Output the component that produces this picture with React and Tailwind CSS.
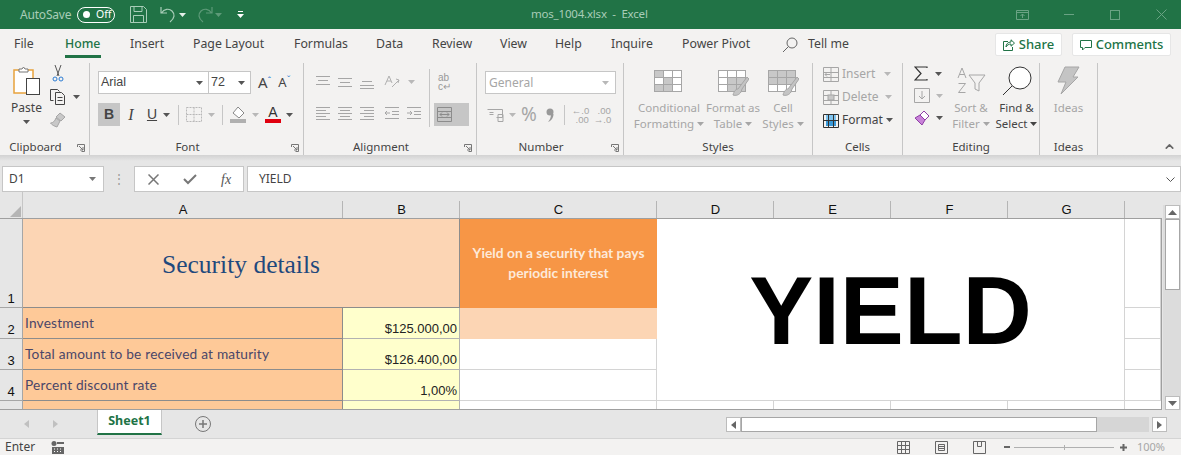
import { ChevronUp } from 'lucide-react';

const UI = 'font-["Noto_Sans",sans-serif]';

function Caret({ className = '', color = '#555' }) {
  return (
    <svg width="7" height="4" viewBox="0 0 7 4" className={className}>
      <path d="M0 0h7L3.5 4z" fill={color} />
    </svg>
  );
}

function Launcher({ color = '#777' }) {
  return (
    <svg width="8" height="8" viewBox="0 0 8 8" className="absolute right-[4px] bottom-[3px]">
      <path d="M0.5 3V0.5H7.5V7.5H4.5" fill="none" stroke={color} />
      <path d="M2 2l4 4M6 3v3H3" fill="none" stroke={color} />
    </svg>
  );
}

function Group({ width, label, launcher, children }) {
  return (
    <div className={`relative shrink-0 flex flex-col h-[92px] mt-[3px] border-r border-[#c6c6c6] ${width}`}>
      <div className="flex-1 min-h-0 flex">{children}</div>
      <div className={`h-[15px] leading-[14px] text-center text-[11.5px] text-[#444] ${launcher ? 'pr-[18px]' : ''}`}>{label}</div>
      {launcher && <Launcher />}
    </div>
  );
}

function Lines({ rows, color = '#a6a6a6', w = 14 }) {
  return (
    <svg width={w} height="14" viewBox={`0 0 ${w} 14`}>
      {rows.map(([y, x1, x2]) => (
        <path key={y} d={`M${x1} ${y}.5H${x2}`} stroke={color} />
      ))}
    </svg>
  );
}

function BigLabel({ top, bottom, color = '#a6a6a6', caret = true }) {
  return (
    <div className="text-center leading-[16px] text-[11.5px] whitespace-nowrap" style={{ color }}>
      <div>{top}</div>
      <div className="flex items-center justify-center gap-[3px]">
        {bottom}
        {caret && <Caret color={color} />}
      </div>
    </div>
  );
}

function TableIcon({ fills = [], brush }) {
  return (
    <svg width="32" height="28" viewBox="0 0 32 28">
      <rect x="1.5" y="1.5" width="27" height="21" fill="#fff" stroke="#a6a6a6" />
      {fills.map(([x, y, w, h], i) => (
        <rect key={i} x={x} y={y} width={w} height={h} fill="#c8c8c8" />
      ))}
      <path d="M1.5 8.5h27M1.5 15.5h27M10.5 1.5v21M19.5 1.5v21" stroke="#a6a6a6" fill="none" />
      {brush && <path d="M30 8l-9 12c-2 0-4 2-5 6 3 1 6 0 8-3l1-3 7-10z" fill="#c4c4c4" stroke="#a6a6a6" />}
    </svg>
  );
}

const tabs = [
  ['File', 'w-[51px]'],
  ['Home', 'w-[65px]'],
  ['Insert', 'w-[63px]'],
  ['Page Layout', 'w-[101px]'],
  ['Formulas', 'w-[82px]'],
  ['Data', 'w-[56px]'],
  ['Review', 'w-[68px]'],
  ['View', 'w-[55px]'],
  ['Help', 'w-[56px]'],
  ['Inquire', 'w-[71px]'],
  ['Power Pivot', 'w-[68px]'],
];

function TitleBar() {
  return (
    <div className="h-[29px] shrink-0 bg-[#217346] flex items-center text-[#a8cdb8]">
      <div className="w-[531px] shrink-0 flex items-center pl-[20px]">
        <span className="w-[57px] text-[12px] tracking-[-0.2px]">AutoSave</span>
        <div className="w-[38px] h-[16px] rounded-full border border-white flex items-center pl-[5px] gap-[6px] text-white text-[10.5px] leading-none">
          <span className="w-[7px] h-[7px] rounded-full bg-white" />
          Off
        </div>
        <svg width="17" height="17" viewBox="0 0 17 17" className="ml-[15px]" fill="none" stroke="#a8cdb8">
          <path d="M.5.5h13l3 3v13H.5zM4 .5v5h8v-5M3.5 16.5v-7h10v7" />
        </svg>
        <svg width="16" height="17" viewBox="0 0 16 17" className="ml-[13px]" fill="none" stroke="#a8cdb8" strokeWidth="1.2">
          <path d="M1 1v6h6M1.5 7C4 3 9 2 12 5s3 7-2 11" />
        </svg>
        <Caret className="ml-[3px]" color="#e6f0ea" />
        <svg width="16" height="17" viewBox="0 0 16 17" className="ml-[11px]" fill="none" stroke="#5d9a78" strokeWidth="1.2">
          <path d="M15 1v6H9M14.5 7C12 3 7 2 4 5s-3 7 2 11" />
        </svg>
        <Caret className="ml-[2px]" color="#5d9a78" />
        <svg width="7" height="7" viewBox="0 0 7 7" className="ml-[15px]">
          <path d="M1 .5h5" stroke="#fff" />
          <path d="M0 3h7L3.5 7z" fill="#fff" />
        </svg>
      </div>
      <span className="whitespace-pre text-[11.5px] tracking-[-0.2px] pb-[2px]">mos_1004.xlsx  -  Excel</span>
      <div className="ml-auto flex items-center pr-[14px]">
        <svg width="13" height="10" viewBox="0 0 13 10" fill="none" stroke="#6aa384">
          <path d="M.5.5h12v9H.5zM.5 2.5h12M6.5 8V4M4.5 6l2-2 2 2" />
        </svg>
        <span className="ml-[35px] w-[10px] h-px bg-[#6aa384]" />
        <span className="ml-[36px] w-[10px] h-[10px] border border-[#6aa384]" />
        <svg width="11" height="11" viewBox="0 0 11 11" className="ml-[36px]" stroke="#6aa384">
          <path d="M.5.5l10 10M10.5.5l-10 10" />
        </svg>
      </div>
    </div>
  );
}

function TabRow() {
  return (
    <div className="h-[31px] shrink-0 flex items-center pl-[14px] text-[12.3px] text-[#444]">
      <div className="flex">
        {tabs.map(([t, w]) => (
          <div key={t} className={`${w} shrink-0 whitespace-nowrap`}>
            <span className={t === 'Home' ? 'relative text-[#217346] font-medium' : ''}>
              {t}
              {t === 'Home' && <span className="absolute left-0 right-[-1px] top-[20px] h-[3px] bg-[#217346]" />}
            </span>
          </div>
        ))}
      </div>
      <svg width="16" height="16" viewBox="0 0 16 16" className="ml-[32px]" fill="none" stroke="#666">
        <circle cx="10" cy="6" r="5" />
        <path d="M6.5 9.5L1 15" />
      </svg>
      <span className="ml-[10px]">Tell me</span>
      <div className="ml-auto mr-[10px] flex gap-[10px] text-[13px] font-medium text-[#217346]">
        <div className="w-[67px] h-[23px] bg-white rounded-[2px] border border-[#e6e6e6] flex items-center justify-center gap-[4px]">
          <svg width="12" height="12" viewBox="0 0 12 12" fill="none" stroke="#217346">
            <path d="M5 2.5H.5v9h9V8M3 8c0-3 2-5 5-5V.8l3.5 3.3L8 7.2V5C6 5 4 6 3 8z" />
          </svg>
          Share
        </div>
        <div className="w-[99px] h-[23px] bg-white rounded-[2px] border border-[#e6e6e6] flex items-center justify-center gap-[4px]">
          <svg width="12" height="12" viewBox="0 0 12 12" fill="none" stroke="#217346">
            <path d="M.5 1.5h11v7H5L2.5 11V8.5h-2z" />
          </svg>
          Comments
        </div>
      </div>
    </div>
  );
}

function Clipboard() {
  return (
    <Group width="w-[90px]" label="Clipboard" launcher>
      <div className="w-[48px] flex flex-col items-center pt-[3px] pl-[5px]">
        <svg width="28" height="30" viewBox="0 0 28 30" fill="none">
          <rect x="1" y="4" width="19" height="23" fill="#fff" stroke="#e8a33d" strokeWidth="1.5" />
          <path d="M6 6V3h3l1.5-2 1.5 2h3v3z" fill="#fff" stroke="#777" />
          <rect x="13.5" y="12.5" width="13" height="16" fill="#fff" stroke="#444" />
        </svg>
        <span className="text-[12px] text-[#444] leading-[16px] mt-[4px]">Paste</span>
        <Caret className="mt-[4px]" />
      </div>
      <div className="flex flex-col pl-[2px] pt-[2px] gap-[7px]">
        <svg width="16" height="17" viewBox="0 0 16 17" fill="none" stroke="#555">
          <path d="M5 0l4 11M11 0L7 11" />
          <circle cx="5" cy="14" r="2" stroke="#2b7cd3" />
          <circle cx="11" cy="14" r="2" stroke="#2b7cd3" />
        </svg>
        <div className="flex items-center gap-[7px]">
          <svg width="16" height="16" viewBox="0 0 16 16" fill="none" stroke="#444">
            <path d="M3.5 11.5H.5V.5h7l2 2M5.5 3.5h6l3 3v9h-9zM7.5 8.5h5M7.5 11.5h5" />
          </svg>
          <Caret />
        </div>
        <svg width="16" height="16" viewBox="0 0 16 16" fill="#c8c8c8" stroke="#a6a6a6">
          <path d="M10 1l5 4-4 4-5-4zM6 6l4 3-3 6c-3-1-5-2-6.5-4C3 11 5 9 6 6z" />
        </svg>
      </div>
    </Group>
  );
}

function Font() {
  return (
    <Group width="w-[214px]" label="Font" launcher>
      <div className="flex flex-col pl-[8px] pt-[8px]">
        <div className="flex items-center h-[23px]">
          <div className="w-[111px] h-[23px] bg-white border border-[#c6c6c6] flex items-center justify-between px-[2px] pr-[5px] text-[12.5px] font-['Liberation_Sans',sans-serif] text-[#444]">
            Arial <Caret />
          </div>
          <div className="w-[42px] h-[23px] bg-white border border-[#c6c6c6] border-l-0 flex items-center justify-between px-[2px] pr-[5px] text-[12.5px] font-['Liberation_Sans',sans-serif] text-[#444]">
            72 <Caret />
          </div>
          <span className="ml-[7px] text-[15px] text-[#444] leading-none">A<sup className="text-[#2b7cd3] text-[9px]">ˆ</sup></span>
          <span className="ml-[7px] text-[13px] text-[#444] leading-none">A<sup className="text-[#2b7cd3] text-[9px]">ˇ</sup></span>
        </div>
        <div className="flex items-center h-[23px] mt-[9px] font-['Liberation_Sans',sans-serif] text-[#444] text-[14px]">
          <div className="w-[22px] h-[23px] bg-[#c6c6c6] flex items-center justify-center font-bold">B</div>
          <span className="w-[10px] ml-[6px] text-center italic font-['Liberation_Serif',serif] text-[16px]">I</span>
          <span className="ml-[10px] w-[12px] text-center underline">U</span>
          <Caret className="ml-[5px]" />
          <span className="ml-[8px] w-px h-[20px] bg-[#c6c6c6]" />
          <svg width="16" height="15" viewBox="0 0 16 15" className="ml-[7px]" fill="none" stroke="#b8b8b8" strokeDasharray="2 1">
            <path d="M.5.5h15v14H.5zM.5 7.5h15M8 .5v14" />
          </svg>
          <Caret className="ml-[6px]" color="#b8b8b8" />
          <span className="ml-[7px] w-px h-[20px] bg-[#c6c6c6]" />
          <svg width="17" height="16" viewBox="0 0 17 16" className="ml-[7px]">
            <path d="M8 0l6 6-5 5-6-5z" fill="#fff" stroke="#888" />
            <rect y="12" width="16" height="4" fill="#b0b0b0" />
          </svg>
          <Caret className="ml-[5px]" color="#b8b8b8" />
          <div className="ml-[6px] w-[16px] flex flex-col items-center leading-[13px] text-[14px] text-[#333]">
            A
            <span className="w-[16px] h-[4px] bg-[#e0000f]" />
          </div>
          <Caret className="ml-[5px]" />
        </div>
      </div>
    </Group>
  );
}

function Alignment() {
  const top = [[[1, 0, 14], [5, 2, 12], [9, 0, 14]], [[3, 0, 14], [7, 2, 12], [11, 0, 14]], [[6, 2, 12], [10, 0, 14], [13, 0, 14]]];
  const bottom = [[[1, 0, 14], [4, 0, 10], [7, 0, 14], [10, 0, 10], [13, 0, 14]], [[1, 0, 14], [4, 2, 12], [7, 0, 14], [10, 2, 12], [13, 0, 14]], [[1, 0, 14], [4, 4, 14], [7, 0, 14], [10, 4, 14], [13, 0, 14]]];
  return (
    <Group width="w-[173px]" label="Alignment" launcher>
      <div className="w-[125px] shrink-0 flex flex-col pl-[12px] pt-[10px]">
        <div className="flex items-center gap-[8px] h-[18px]">
          {top.map((r, i) => (
            <Lines key={i} rows={r} />
          ))}
          <svg width="16" height="16" viewBox="0 0 16 16" className="ml-[2px]" fill="none" stroke="#b0b0b0">
            <path d="M1 11l4-9 3 7M3 7l4 0M8 13L15 6M12 5l3 1-1 3" />
          </svg>
          <Caret color="#b8b8b8" />
        </div>
        <div className="flex items-center gap-[8px] h-[14px] mt-[15px]">
          {bottom.map((r, i) => (
            <Lines key={i} rows={r} />
          ))}
          <svg width="14" height="14" viewBox="0 0 14 14" className="ml-[3px]" fill="none" stroke="#a6a6a6">
            <path d="M0 1.5h14M0 12.5h14M7 5.5h7M7 8.5h7M5 7H0M2 5L0 7l2 2" />
          </svg>
          <svg width="14" height="14" viewBox="0 0 14 14" fill="none" stroke="#a6a6a6">
            <path d="M0 1.5h14M0 12.5h14M7 5.5h7M7 8.5h7M0 7h5M3 5l2 2-2 2" />
          </svg>
        </div>
      </div>
      <div className="flex flex-col mt-[6px] h-[58px] border-l border-[#c6c6c6] pl-[4px]">
        <div className="ml-[4px] mt-[4px] text-[10px] leading-[9px] text-[#999] h-[18px] font-['Liberation_Sans',sans-serif]">
          ab
          <br />c↵
        </div>
        <div className="mt-[12px] w-[35px] h-[23px] bg-[#c6c6c6] flex items-center pl-[3px]">
          <svg width="15" height="15" viewBox="0 0 15 15" fill="none" stroke="#8c8c8c">
            <path d="M.5.5h14v14H.5zM.5 4.5h14M.5 10.5h14M3 7.5h9M5 5.5l-2 2 2 2M10 5.5l2 2-2 2" />
          </svg>
        </div>
      </div>
    </Group>
  );
}

function NumberGroup() {
  return (
    <Group width="w-[147px]" label="Number" launcher>
      <div className="flex flex-col pl-[8px] pt-[8px]">
        <div className="w-[131px] h-[23px] bg-white border border-[#c6c6c6] flex items-center justify-between pl-[3px] pr-[6px] text-[12px] text-[#a6a6a6]">
          General <Caret color="#b8b8b8" />
        </div>
        <div className="flex items-center h-[23px] mt-[9px] text-[#a6a6a6]">
          <svg width="17" height="14" viewBox="0 0 17 14" className="ml-[2px]" fill="none" stroke="#a6a6a6">
            <path d="M.5 1.5h15v8h-6M11 6.5h5v7h-5zM2.5 6.5h4M2.5 4.5h4" />
          </svg>
          <Caret className="ml-[5px]" color="#b8b8b8" />
          <span className="ml-[5px] text-[19px] leading-none">%</span>
          <svg width="8" height="14" viewBox="0 0 8 14" className="ml-[9px]" fill="#999">
            <circle cx="4" cy="4" r="3.5" />
            <path d="M5 6h2.5C7.5 10 5 13 2 14c2-2 3-5 3-8z" />
          </svg>
          <span className="ml-[10px] w-px h-[20px] bg-[#c6c6c6]" />
          <div className="ml-[7px] text-[9.5px] leading-[9px] font-['Liberation_Sans',sans-serif] w-[17px] text-right">
            ←.0
            <br />.00
          </div>
          <div className="ml-[5px] text-[9.5px] leading-[9px] font-['Liberation_Sans',sans-serif] w-[17px] text-right">
            .00
            <br />→.0
          </div>
        </div>
      </div>
    </Group>
  );
}

function Styles() {
  return (
    <Group width="w-[189px]" label="Styles">
      <div className="flex w-full pt-[6px] pl-[8px]">
        <div className="w-[74px] flex flex-col items-center">
          <TableIcon fills={[[2, 2, 8, 6], [11, 9, 8, 6], [2, 16, 17, 6]]} />
          <div className="mt-[3px]">
            <BigLabel top="Conditional" bottom="Formatting" />
          </div>
        </div>
        <div className="w-[54px] flex flex-col items-center">
          <TableIcon brush fills={[[11, 9, 17, 13]]} />
          <div className="mt-[3px]">
            <BigLabel top="Format as" bottom="Table" />
          </div>
        </div>
        <div className="w-[46px] flex flex-col items-center">
          <TableIcon brush fills={[[2, 2, 26, 13]]} />
          <div className="mt-[3px]">
            <BigLabel top="Cell" bottom="Styles" />
          </div>
        </div>
      </div>
    </Group>
  );
}

function Cells() {
  return (
    <Group width="w-[90px]" label="Cells">
      <div className="flex flex-col pl-[10px] pt-[3px] gap-[7px] text-[12px] leading-[16px] text-[#a6a6a6]">
        <div className="flex items-center h-[16px]">
          <svg width="16" height="15" viewBox="0 0 16 15" fill="none" stroke="#a6a6a6">
            <path d="M.5.5h15v14H.5zM.5 5.5h15M.5 10.5h15M8 .5v14M7 7.5H2M4 5.5l-2 2 2 2" />
          </svg>
          <span className="ml-[3px]">Insert</span>
          <Caret className="ml-[9px]" color="#b8b8b8" />
        </div>
        <div className="flex items-center h-[16px]">
          <svg width="16" height="15" viewBox="0 0 16 15" fill="none" stroke="#a6a6a6">
            <path d="M.5.5h15v14H.5zM.5 5.5h15M.5 10.5h15M8 .5v14" />
            <rect x="5" y="5" width="6" height="5" fill="#c8c8c8" />
          </svg>
          <span className="ml-[3px]">Delete</span>
          <Caret className="ml-[6px]" color="#b8b8b8" />
        </div>
        <div className="flex items-center h-[16px] text-[#444]">
          <svg width="16" height="16" viewBox="0 0 16 16" fill="none" stroke="#333">
            <rect x="3" y="2" width="10" height="6" fill="#7fc4ef" stroke="none" />
            <rect x="3" y="8" width="10" height="6" fill="#3a9ad9" stroke="none" />
            <path d="M.5 2.5h15v13H.5zM.5 8.5h15M5.5 2.5v13M10.5 2.5v13" />
          </svg>
          <span className="ml-[3px]">Format</span>
          <Caret className="ml-[3px]" />
        </div>
      </div>
    </Group>
  );
}

function Editing() {
  return (
    <Group width="w-[137px]" label="Editing">
      <div className="w-[50px] flex flex-col pl-[11px] pt-[3px] gap-[7px]">
        <div className="flex items-center gap-[7px] h-[15px]">
          <svg width="14" height="15" viewBox="0 0 14 15" fill="none" stroke="#333" strokeWidth="1.2">
            <path d="M13 2V1H1l6 6.5L1 14h12v-1" />
          </svg>
          <Caret />
        </div>
        <div className="flex items-center gap-[6px] h-[15px]">
          <svg width="16" height="15" viewBox="0 0 16 15" fill="none" stroke="#a6a6a6">
            <path d="M.5.5h15v14H.5zM8 3v8M5 8l3 3 3-3" />
          </svg>
          <Caret color="#b8b8b8" />
        </div>
        <div className="flex items-center gap-[6px] h-[16px]">
          <svg width="16" height="16" viewBox="0 0 16 16" stroke="#8e3ea6">
            <path d="M10 1l5 5-4 4-5-5z" fill="#fff" />
            <path d="M6 5l5 5-3 5-7-7z" fill="#c882d8" />
          </svg>
          <Caret />
        </div>
      </div>
      <div className="w-[36px] flex flex-col items-center pt-[4px]">
        <svg width="29" height="28" viewBox="0 0 29 28" fill="none" stroke="#a6a6a6">
          <path d="M1 11L5 1l4 10M2.5 7.5h5M1.5 16.5h7l-7 9h7M12 8h16l-6 8v8l-4-2v-6z" />
        </svg>
        <div className="mt-[5px]">
          <BigLabel top="Sort &" bottom="Filter" />
        </div>
      </div>
      <div className="flex-1 flex flex-col items-center pt-[3px] pl-[5px]">
        <svg width="30" height="30" viewBox="0 0 30 30" fill="#fff" stroke="#333">
          <circle cx="18" cy="12" r="11" />
          <path d="M10 20L1 29" />
        </svg>
        <div className="mt-[4px]">
          <BigLabel top="Find &" bottom="Select" color="#444" />
        </div>
      </div>
    </Group>
  );
}

function Ideas() {
  return (
    <Group width="w-[58px]" label="Ideas">
      <div className="w-full flex flex-col items-center pt-[3px]">
        <svg width="23" height="29" viewBox="0 0 23 29" fill="#c4c4c4" stroke="#a6a6a6">
          <path d="M8 1h14l-6 10h5L4 28l5-12H1z" />
        </svg>
        <div className="mt-[5px]">
          <BigLabel top="Ideas" bottom="" caret={false} />
        </div>
      </div>
    </Group>
  );
}

function FormulaBar() {
  return (
    <div className="h-[37px] shrink-0 pt-[11px] bg-[linear-gradient(#d2d2d2,#e6e6e6_6px)] flex text-[12px] text-[#444]">
      <div className="ml-[2px] w-[102px] h-[26px] bg-white border border-[#c6c6c6] flex items-center justify-between pl-[6px] pr-[7px]">
        D1 <Caret color="#777" />
      </div>
      <div className="w-[30px] flex justify-center items-center text-[#999] leading-none">⋮</div>
      <div className="w-[110px] h-[26px] bg-white border border-[#c6c6c6] flex items-center pl-[13px] gap-[24px]">
        <svg width="11" height="11" viewBox="0 0 11 11" stroke="#777" strokeWidth="1.5">
          <path d="M.5.5l10 10M10.5.5l-10 10" />
        </svg>
        <svg width="14" height="11" viewBox="0 0 14 11" fill="none" stroke="#777" strokeWidth="2">
          <path d="M1 5l4 4 8-8" />
        </svg>
        <span className="italic font-['Liberation_Serif',serif] text-[14px] text-[#555]">fx</span>
      </div>
      <div className="ml-[3px] flex-1 h-[26px] bg-white border border-[#c6c6c6] flex items-center justify-between pl-[11px] pr-[5px]">
        YIELD
        <svg width="9" height="5" viewBox="0 0 9 5" fill="none" stroke="#555">
          <path d="M.5.5l4 4 4-4" />
        </svg>
      </div>
    </div>
  );
}

const columns = ['A', 'B', 'C', 'D', 'E', 'F', 'G', ''];
const colWidths = ['w-[320px]', 'w-[117px]', 'w-[197px]', 'w-[117px]', 'w-[117px]', 'w-[117px]', 'w-[117px]', 'flex-1'];

function RowHead({ n }) {
  return (
    <div className="bg-[#e6e6e6] border-r border-b border-[#a6a6a6] flex items-end justify-center leading-[17px]">{n}</div>
  );
}

function Sheet() {
  const labelCell = 'bg-[#fec998] border-r border-b border-[#8c8c8c] pl-[2px] text-[13.7px] leading-[30px] h-full text-[#4a4668] font-["Lato",sans-serif] tracking-[0.2px]';
  const valueCell = 'bg-[#ffffcc] border-r border-b border-[#b2b2b2] flex items-end justify-end pr-[2px] leading-[19px] text-[#222]';
  const emptyCell = 'bg-white border-r border-b border-[#d4d4d4]';
  return (
    <div className="flex-1 min-h-0 flex bg-[#e6e6e6] font-['Liberation_Sans',sans-serif] text-[13px] text-[#111]">
      <div className="flex-1 min-w-0 flex flex-col">
        <div className="h-[27px] shrink-0 flex border-b border-[#9f9f9f]">
          <div className="w-[23px] shrink-0 relative border-r border-[#c6c6c6]">
            <svg width="11" height="11" viewBox="0 0 11 11" className="absolute right-[1px] bottom-[1px]">
              <path d="M11 0v11H0z" fill="#b5b5b5" />
            </svg>
          </div>
          {columns.map((c, i) => (
            <div key={i} className={`${colWidths[i]} shrink-0 flex items-end justify-center leading-[17px] relative`}>
              {c}
              {c && <span className="absolute right-0 bottom-0 h-[17px] w-px bg-[#b5b5b5]" />}
            </div>
          ))}
        </div>
        <div className="shrink-0 grid grid-cols-[23px_320px_117px_197px_117px_117px_117px_117px_1fr] grid-rows-[89px_31px_31px_31px_8px] border-b border-r border-[#9f9f9f]">
          <RowHead n="1" />
          <div className="col-span-2 bg-[#fcd5b4] border-r border-b border-[#8c8c8c] flex items-center justify-center pt-[4px] text-[25.5px] text-[#1f497d] font-['Liberation_Serif',serif]">
            Security details
          </div>
          <div className="bg-[#f79646] flex items-center justify-center text-center text-[13.8px] leading-[20px] font-bold text-[#fde9d9] font-['Lato',sans-serif] px-[8px] pb-[2px]">
            Yield on a security that pays periodic interest
          </div>
          <div className="col-span-4 row-span-4 bg-white border-b border-r border-[#d4d4d4] flex items-center justify-center pt-[2px] text-[96px] font-bold text-black leading-none">
            YIELD
          </div>
          <div className={emptyCell} />

          <RowHead n="2" />
          <div className={labelCell}>Investment</div>
          <div className={valueCell}>$125.000,00</div>
          <div className="bg-[#fcd5b4] border-b border-[#fcd5b4]" />
          <div className={emptyCell} />

          <RowHead n="3" />
          <div className={labelCell}>Total amount to be received at maturity</div>
          <div className={valueCell}>$126.400,00</div>
          <div className="bg-white border-b border-r border-[#d4d4d4]" />
          <div className={emptyCell} />

          <RowHead n="4" />
          <div className={labelCell}>Percent discount rate</div>
          <div className={valueCell}>1,00%</div>
          <div className="bg-white border-b border-r border-[#d4d4d4]" />
          <div className={emptyCell} />

          <div className="bg-[#e6e6e6] border-r border-[#a6a6a6]" />
          <div className="bg-[#fec998] border-r border-[#8c8c8c]" />
          <div className="bg-[#ffffcc] border-r border-[#b2b2b2]" />
          <div className={`${emptyCell} border-b-0`} />
          <div className={`${emptyCell} border-b-0`} />
          <div className={`${emptyCell} border-b-0`} />
          <div className={`${emptyCell} border-b-0`} />
          <div className={`${emptyCell} border-b-0`} />
          <div className="bg-white" />
        </div>
      </div>
      <div className="w-[18px] shrink-0 flex flex-col items-center bg-[#dcdcdc] ml-px">
        <div className="w-full h-[13px] bg-[#e6e6e6]" />
        <div className="w-[15px] h-[14px] bg-white border border-[#bcbcbc] flex items-center justify-center">
          <svg width="9" height="5" viewBox="0 0 9 5"><path d="M0 5h9L4.5 0z" fill="#666" /></svg>
        </div>
        <div className="w-[15px] h-[71px] bg-white border border-[#a6a6a6]" />
        <div className="flex-1" />
        <div className="w-[15px] h-[14px] bg-white border border-[#bcbcbc] flex items-center justify-center">
          <svg width="9" height="5" viewBox="0 0 9 5"><path d="M0 0h9L4.5 5z" fill="#666" /></svg>
        </div>
      </div>
    </div>
  );
}

function SheetTabs() {
  return (
    <div className="h-[28px] shrink-0 bg-[#e6e6e6] flex">
      <div className="w-[97px] flex items-center pl-[24px] gap-[24px]">
        <svg width="5" height="8" viewBox="0 0 5 8"><path d="M5 0v8L0 4z" fill="#c0c0c0" /></svg>
        <svg width="5" height="8" viewBox="0 0 5 8"><path d="M0 0v8l5-4z" fill="#c0c0c0" /></svg>
      </div>
      <div className="w-[65px] h-[25px] bg-white border-x border-[#c6c6c6] border-b-2 border-b-[#217346] flex items-center justify-center text-[12.5px] font-bold text-[#217346]">
        Sheet1
      </div>
      <svg width="16" height="16" viewBox="0 0 16 16" className="ml-[33px] mt-[6px]" fill="none" stroke="#777">
        <circle cx="8" cy="8" r="7.5" />
        <path d="M8 4v8M4 8h8" strokeWidth="1.5" />
      </svg>
      <div className="ml-[515px] mt-[7px] flex h-[15px]">
        <div className="w-[15px] border border-[#bcbcbc] bg-white flex items-center justify-center">
          <svg width="5" height="8" viewBox="0 0 5 8"><path d="M5 0v8L0 4z" fill="#666" /></svg>
        </div>
        <div className="w-[356px] bg-white border border-[#a6a6a6]" />
        <div className="w-[52px] bg-[#d6d6d6]" />
        <div className="ml-[3px] w-[15px] border border-[#bcbcbc] bg-white flex items-center justify-center">
          <svg width="5" height="8" viewBox="0 0 5 8"><path d="M0 0v8l5-4z" fill="#666" /></svg>
        </div>
      </div>
    </div>
  );
}

function StatusBar() {
  return (
    <div className="h-[17px] shrink-0 bg-[#f3f2f1] border-t border-[#d4d4d4] flex items-center pl-[5px] text-[12px] text-[#444]">
      Enter
      <svg width="13" height="13" viewBox="0 0 13 13" className="ml-[16px]" fill="#666">
        <circle cx="3" cy="2.5" r="2.5" />
        <path d="M6 1h7v2H6zM1 6h12v7H1z" />
        <path d="M3 8h1M6 8h1M9 8h1M3 10.5h1M6 10.5h1M9 10.5h1" stroke="#fff" />
      </svg>
      <div className="ml-auto flex items-center pr-[16px]">
        <svg width="13" height="13" viewBox="0 0 13 13" fill="none" stroke="#666">
          <path d="M.5.5h12v12H.5zM4.5.5v12M8.5.5v12M.5 4.5h12M.5 8.5h12" />
        </svg>
        <svg width="13" height="13" viewBox="0 0 13 13" className="ml-[25px]" fill="none" stroke="#666">
          <path d="M.5.5h12v12H.5zM3.5 3.5h6v6h-6zM3.5 5.5h6M3.5 7.5h6" />
        </svg>
        <svg width="13" height="13" viewBox="0 0 13 13" className="ml-[25px]" fill="none" stroke="#666">
          <path d="M.5.5h12v12H.5zM4.5.5v5h4v-5" />
        </svg>
        <span className="ml-[18px] w-[6px] h-[2px] bg-[#666]" />
        <div className="ml-[4px] w-[100px] h-px bg-[#b0b0b0] relative">
          <span className="absolute left-1/2 -top-[2px] w-px h-[5px] bg-[#b0b0b0]" />
        </div>
        <svg width="7" height="7" viewBox="0 0 7 7" className="ml-[6px]" stroke="#666" strokeWidth="2">
          <path d="M3.5 0v7M0 3.5h7" />
        </svg>
        <span className="ml-[10px] text-[#a6a6a6] text-[11px]">100%</span>
      </div>
    </div>
  );
}

export default function App() {
  return (
    <div className={`w-[1181px] h-[455px] overflow-hidden flex flex-col bg-[#f3f2f1] ${UI}`}>
      <TitleBar />
      <TabRow />
      <div className="relative h-[95px] shrink-0 flex">
        <Clipboard />
        <Font />
        <Alignment />
        <NumberGroup />
        <Styles />
        <Cells />
        <Editing />
        <Ideas />
        <ChevronUp size={13} strokeWidth={3} color="#666" className="absolute right-[5px] bottom-[2px]" />
      </div>
      <FormulaBar />
      <Sheet />
      <SheetTabs />
      <StatusBar />
    </div>
  );
}
